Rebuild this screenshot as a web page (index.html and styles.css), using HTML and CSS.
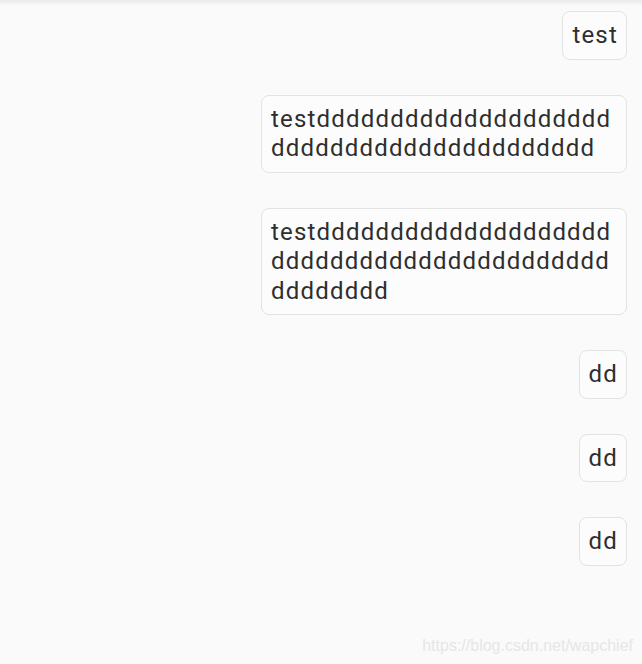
FILE: index.html
```html
<!DOCTYPE html>
<html lang="en">
<head>
    <meta charset="UTF-8">
    <meta name="viewport" content="width=device-width, initial-scale=1.0">
    <title>Chat</title>
    <link rel="stylesheet" href="styles.css">
</head>
<body>

    <!-- Message list -->
    <div class="chat-list">
        <div class="bubble">test</div>
        <div class="bubble">testdddddddddddddddddddddddddddddddddddddddddd</div>
        <div class="bubble">testddddddddddddddddddddddddddddddddddddddddddddddddddd</div>
        <div class="bubble">dd</div>
        <div class="bubble">dd</div>
        <div class="bubble">dd</div>
    </div>

    <!-- Watermark -->
    <span class="watermark">https://blog.csdn.net/wapchief</span>

</body>
</html>
```

FILE: styles.css
```css
* {
    margin: 0;
    padding: 0;
    box-sizing: border-box;
}

body {
    font-family: 'Roboto', sans-serif;
    background-color: #fafafa;
    color: #2e2e2e;
    width: 642px;
    height: 664px;
    position: relative;
    overflow: hidden;
}

/* Top shadow from app bar */
body::before {
    content: "";
    display: block;
    height: 6px;
    margin-bottom: -6px;
    background: linear-gradient(#e9e9e9, #fafafa);
}

/* Chat list */
.chat-list {
    display: flex;
    flex-direction: column;
    align-items: flex-end;
    gap: 35px;
    padding: 11px 15px 0 0;
}

.bubble {
    max-width: 366px;
    padding: 9px 8px 8px 9px;
    border: 1px solid #e3e3e3;
    border-radius: 8px;
    background-color: #fcfcfc;
    font-size: 24px;
    line-height: 29.5px;
    letter-spacing: 1.2px;
    word-break: break-all;
}

/* Watermark */
.watermark {
    position: absolute;
    right: 9px;
    bottom: 9px;
    font-family: 'Liberation Sans', Arial, sans-serif;
    font-size: 16px;
    color: #e6e6e6;
}
```
